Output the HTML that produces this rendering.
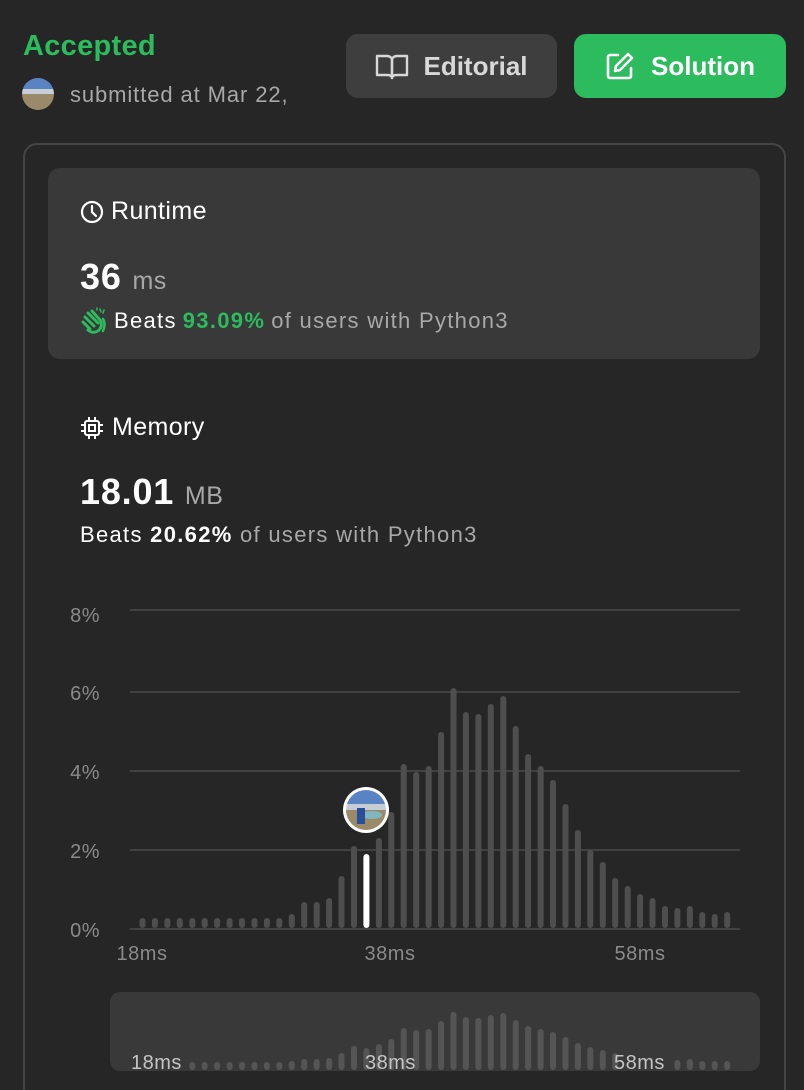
<!DOCTYPE html>
<html><head><meta charset="utf-8"><style>
*{margin:0;padding:0;box-sizing:border-box}
html,body{width:804px;height:1090px;overflow:hidden}
body{background:#262626;font-family:"Liberation Sans",sans-serif;position:relative;color:#fff}
.abs{position:absolute;white-space:nowrap}
</style></head><body>
<div class="abs" style="left:23px;top:30px;font-size:29px;font-weight:600;letter-spacing:0.3px;color:#2cbb5d">Accepted</div>
<div class="abs" style="left:22px;top:78px;width:32px;height:32px;border-radius:50%;background:linear-gradient(#5a83c4 0 35%,#c9cfd6 35% 50%,#9a8a6a 50% 100%)"></div>
<div class="abs" style="left:70px;top:82px;font-size:22px;letter-spacing:0.9px;color:#a8a8a8">submitted at Mar 22,</div>
<div class="abs" style="left:346px;top:34px;width:211px;height:64px;border-radius:12px;background:#3e3e3e;color:#d8d8d8;font-size:26px;font-weight:600;display:flex;align-items:center;justify-content:center;gap:14px">
<svg width="34" height="28" viewBox="0 0 34 28" fill="none" stroke="#d8d8d8" stroke-width="2.4" stroke-linejoin="round"><path d="M2 4h10c3 0 5 2 5 4v18c0-2-2-3-5-3H2z"/><path d="M32 4H22c-3 0-5 2-5 4v18c0-2 2-3 5-3h10z"/></svg>Editorial</div>
<div class="abs" style="left:574px;top:34px;width:212px;height:64px;border-radius:12px;background:#2cbb5d;color:#fff;font-size:26px;font-weight:600;display:flex;align-items:center;justify-content:center;gap:16px">
<svg width="30" height="30" viewBox="0 0 30 30" fill="none" stroke="#fff" stroke-width="2.6" stroke-linecap="round" stroke-linejoin="round"><path d="M13 4H5a2 2 0 0 0-2 2v19a2 2 0 0 0 2 2h19a2 2 0 0 0 2-2v-8"/><path d="M23 3l4 4-12 12-5 1 1-5z"/></svg>Solution</div>

<div class="abs" style="left:23px;top:143px;width:763px;height:990px;border:2px solid #454545;border-radius:14px"></div>
<div class="abs" style="left:48px;top:168px;width:712px;height:191px;border-radius:12px;background:#393939"></div>
<div class="abs" style="left:80px;top:197px;font-size:25px;letter-spacing:0.4px;display:flex;align-items:center;gap:7px">
<svg width="24" height="24" viewBox="0 0 24 24" fill="none" stroke="#fff" stroke-width="2.2" stroke-linecap="round"><circle cx="12" cy="12" r="10"/><path d="M12 6v6l4 4"/></svg>Runtime</div>
<div class="abs" style="left:80px;top:256px;font-size:36px;font-weight:700;letter-spacing:0.8px">36 <span style="font-size:25px;font-weight:400;color:#a8a8a8;letter-spacing:0.5px">ms</span></div>
<div class="abs" style="left:80px;top:307px;font-size:22px;letter-spacing:1.3px;display:flex;align-items:center;gap:6px">
<svg width="28" height="28" viewBox="0 0 28 28" fill="none" stroke="#2cbb5d" stroke-width="3" stroke-linecap="round"><path d="M5 10l9 9M3 15l7 7M8 6l10 10M12 4l8 9c2 3 2 7-1 10s-8 3-11 0"/><path d="M23 12c2 3 2 8 0 12" stroke-width="2.5"/><path d="M20 2l1 3M24 3l-1 3M17 1l0 2" stroke-width="1.5"/></svg>Beats <span style="color:#2cbb5d;font-weight:700">93.09%</span> <span style="color:#a8a8a8">of users with Python3</span></div>

<div class="abs" style="left:80px;top:413px;font-size:25px;letter-spacing:0.4px;display:flex;align-items:center;gap:8px">
<svg width="24" height="24" viewBox="0 0 24 24" fill="none" stroke="#fff" stroke-width="2"><rect x="5" y="5" width="14" height="14" rx="2"/><rect x="9" y="9" width="6" height="6"/><path d="M9 1v4M15 1v4M9 19v4M15 19v4M1 9h4M1 15h4M19 9h4M19 15h4"/></svg>Memory</div>
<div class="abs" style="left:80px;top:471px;font-size:36px;font-weight:700;letter-spacing:0.8px">18.01 <span style="font-size:25px;font-weight:400;color:#a8a8a8;letter-spacing:0.5px">MB</span></div>
<div class="abs" style="left:80px;top:522px;font-size:22px;letter-spacing:1.3px">Beats <b>20.62%</b> <span style="color:#a8a8a8">of users with Python3</span></div>

<div class="abs" style="left:110px;top:992px;width:650px;height:79px;border-radius:10px;background:#393939"></div>

<svg class="abs" style="left:0;top:0" width="804" height="1090">
<g stroke="#4a4a4a" stroke-width="1.5">
<line x1="130" y1="610" x2="740" y2="610"/><line x1="130" y1="692" x2="740" y2="692"/><line x1="130" y1="771" x2="740" y2="771"/><line x1="130" y1="850" x2="740" y2="850"/><line x1="130" y1="929" x2="740" y2="929"/>
</g>
<g font-size="20" fill="#8a8a8a" font-family="Liberation Sans" text-anchor="end" letter-spacing="0.5">
<text x="100" y="622">8%</text><text x="100" y="700">6%</text><text x="100" y="779">4%</text><text x="100" y="858">2%</text><text x="100" y="937">0%</text>
</g>
<g font-size="20" fill="#8a8a8a" font-family="Liberation Sans" text-anchor="middle" letter-spacing="0.5">
<text x="142" y="960">18ms</text><text x="390" y="960">38ms</text><text x="640" y="960">58ms</text>
</g>
<g fill="#4e4e4e">
<rect x="139.5" y="918" width="6" height="10" rx="3"/>
<rect x="151.9" y="918" width="6" height="10" rx="3"/>
<rect x="164.4" y="918" width="6" height="10" rx="3"/>
<rect x="176.8" y="918" width="6" height="10" rx="3"/>
<rect x="189.3" y="918" width="6" height="10" rx="3"/>
<rect x="201.7" y="918" width="6" height="10" rx="3"/>
<rect x="214.1" y="918" width="6" height="10" rx="3"/>
<rect x="226.6" y="918" width="6" height="10" rx="3"/>
<rect x="239" y="918" width="6" height="10" rx="3"/>
<rect x="251.5" y="918" width="6" height="10" rx="3"/>
<rect x="263.9" y="918" width="6" height="10" rx="3"/>
<rect x="276.3" y="918" width="6" height="10" rx="3"/>
<rect x="288.8" y="914" width="6" height="14" rx="3"/>
<rect x="301.2" y="902" width="6" height="26" rx="3"/>
<rect x="313.7" y="902" width="6" height="26" rx="3"/>
<rect x="326.1" y="898" width="6" height="30" rx="3"/>
<rect x="338.5" y="876" width="6" height="52" rx="3"/>
<rect x="351" y="846" width="6" height="82" rx="3"/>
<rect x="375.9" y="838" width="6" height="90" rx="3"/>
<rect x="388.3" y="812" width="6" height="116" rx="3"/>
<rect x="400.7" y="764" width="6" height="164" rx="3"/>
<rect x="413.2" y="772" width="6" height="156" rx="3"/>
<rect x="425.6" y="766" width="6" height="162" rx="3"/>
<rect x="438.1" y="732" width="6" height="196" rx="3"/>
<rect x="450.5" y="688" width="6" height="240" rx="3"/>
<rect x="462.9" y="712" width="6" height="216" rx="3"/>
<rect x="475.4" y="714" width="6" height="214" rx="3"/>
<rect x="487.8" y="704" width="6" height="224" rx="3"/>
<rect x="500.3" y="696" width="6" height="232" rx="3"/>
<rect x="512.7" y="726" width="6" height="202" rx="3"/>
<rect x="525.1" y="754" width="6" height="174" rx="3"/>
<rect x="537.6" y="766" width="6" height="162" rx="3"/>
<rect x="550" y="780" width="6" height="148" rx="3"/>
<rect x="562.5" y="804" width="6" height="124" rx="3"/>
<rect x="574.9" y="830" width="6" height="98" rx="3"/>
<rect x="587.3" y="850" width="6" height="78" rx="3"/>
<rect x="599.8" y="862" width="6" height="66" rx="3"/>
<rect x="612.2" y="878" width="6" height="50" rx="3"/>
<rect x="624.7" y="886" width="6" height="42" rx="3"/>
<rect x="637.1" y="894" width="6" height="34" rx="3"/>
<rect x="649.5" y="898" width="6" height="30" rx="3"/>
<rect x="662" y="906" width="6" height="22" rx="3"/>
<rect x="674.4" y="908" width="6" height="20" rx="3"/>
<rect x="686.9" y="906" width="6" height="22" rx="3"/>
<rect x="699.3" y="912" width="6" height="16" rx="3"/>
<rect x="711.7" y="914" width="6" height="14" rx="3"/>
<rect x="724.2" y="912" width="6" height="16" rx="3"/>
</g>
<rect x="363.4" y="854" width="6" height="74" rx="3" fill="#fff"/>
<circle cx="366" cy="810" r="23" fill="#fff"/>
<clipPath id="av"><circle cx="366" cy="810" r="20"/></clipPath>
<g clip-path="url(#av)"><rect x="346" y="790" width="40" height="14" fill="#5a83c4"/><rect x="346" y="804" width="40" height="6" fill="#c5cdd5"/><rect x="346" y="810" width="40" height="20" fill="#9a8a6a"/><ellipse cx="372" cy="815" rx="10" ry="4" fill="#7fb7c0"/><rect x="357" y="808" width="8" height="16" fill="#2a4f9a"/></g>

<g fill="#555">
<rect x="189.3" y="1062" width="6" height="8" rx="3"/><rect x="201.7" y="1062" width="6" height="8" rx="3"/><rect x="214.1" y="1062" width="6" height="8" rx="3"/><rect x="226.6" y="1062" width="6" height="8" rx="3"/><rect x="239" y="1062" width="6" height="8" rx="3"/><rect x="251.5" y="1062" width="6" height="8" rx="3"/><rect x="263.9" y="1062" width="6" height="8" rx="3"/><rect x="276.3" y="1062" width="6" height="8" rx="3"/><rect x="288.8" y="1061" width="6" height="9" rx="3"/><rect x="301.2" y="1059" width="6" height="11" rx="3"/><rect x="313.7" y="1059" width="6" height="11" rx="3"/><rect x="326.1" y="1058" width="6" height="12" rx="3"/><rect x="338.5" y="1053" width="6" height="17" rx="3"/><rect x="351" y="1046" width="6" height="24" rx="3"/><rect x="363.4" y="1048" width="6" height="22" rx="3"/><rect x="375.9" y="1044" width="6" height="26" rx="3"/><rect x="388.3" y="1039" width="6" height="31" rx="3"/><rect x="400.7" y="1028" width="6" height="42" rx="3"/><rect x="413.2" y="1030" width="6" height="40" rx="3"/><rect x="425.6" y="1029" width="6" height="41" rx="3"/><rect x="438.1" y="1021" width="6" height="49" rx="3"/><rect x="450.5" y="1012" width="6" height="58" rx="3"/><rect x="462.9" y="1017" width="6" height="53" rx="3"/><rect x="475.4" y="1018" width="6" height="52" rx="3"/><rect x="487.8" y="1015" width="6" height="55" rx="3"/><rect x="500.3" y="1013" width="6" height="57" rx="3"/><rect x="512.7" y="1020" width="6" height="50" rx="3"/><rect x="525.1" y="1026" width="6" height="44" rx="3"/><rect x="537.6" y="1029" width="6" height="41" rx="3"/><rect x="550" y="1032" width="6" height="38" rx="3"/><rect x="562.5" y="1037" width="6" height="33" rx="3"/><rect x="574.9" y="1043" width="6" height="27" rx="3"/><rect x="587.3" y="1047" width="6" height="23" rx="3"/><rect x="599.8" y="1050" width="6" height="20" rx="3"/><rect x="612.2" y="1053" width="6" height="17" rx="3"/><rect x="674.4" y="1060" width="6" height="10" rx="3"/><rect x="686.9" y="1059" width="6" height="11" rx="3"/><rect x="699.3" y="1061" width="6" height="9" rx="3"/><rect x="711.7" y="1061" width="6" height="9" rx="3"/><rect x="724.2" y="1061" width="6" height="9" rx="3"/>
</g>
<g font-size="20" fill="#c4c4c4" font-family="Liberation Sans" letter-spacing="0.5">
<text x="131" y="1069">18ms</text><text x="365" y="1069">38ms</text><text x="614" y="1069">58ms</text>
</g>
</svg>
</body></html>
